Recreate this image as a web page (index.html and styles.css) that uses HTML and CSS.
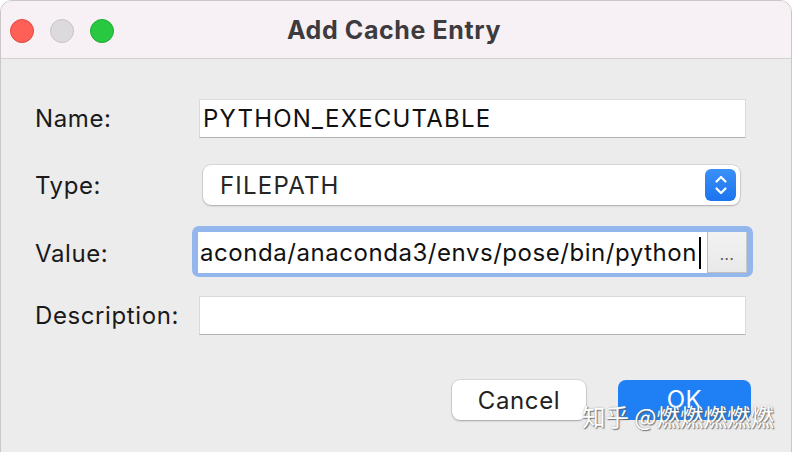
FILE: index.html
```html
<!DOCTYPE html>
<html>
<head>
<meta charset="utf-8">
<link rel="stylesheet" href="styles.css">
</head>
<body>
<div class="window">
  <div class="titlebar">
    <div class="lights">
      <span class="dot red"></span>
      <span class="dot grey"></span>
      <span class="dot green"></span>
    </div>
    <div class="title">Add Cache Entry</div>
    <div class="spacer"></div>
  </div>
  <div class="form">
    <div class="row row-name">
      <div class="label">Name:</div>
      <div class="field"><span class="caps">PYTHON_EXECUTABLE</span></div>
    </div>
    <div class="row row-type">
      <div class="label">Type:</div>
      <div class="select">
        <span class="caps">FILEPATH</span>
        <span class="stepper">
          <svg width="14" height="22" viewBox="0 0 14 22"><path d="M2.5 7.5 L7 3 L11.5 7.5 M2.5 14.5 L7 19 L11.5 14.5" fill="none" stroke="#fff" stroke-width="2.2" stroke-linecap="round" stroke-linejoin="round"/></svg>
        </span>
      </div>
    </div>
    <div class="row row-value">
      <div class="label">Value:</div>
      <div class="ring">
        <div class="vfield"><span class="vtext">aconda/anaconda3/envs/pose/bin/python</span><span class="caret"></span></div>
        <div class="browse">...</div>
      </div>
    </div>
    <div class="row row-desc">
      <div class="label">Description:</div>
      <div class="field"></div>
    </div>
  </div>
  <div class="buttons">
    <div class="btn cancel">Cancel</div>
    <div class="btn ok">OK</div>
  </div>
  <div class="watermark">知乎 @燃燃燃燃燃</div>
</div>
</body>
</html>
```
FILE: styles.css
```css
* { box-sizing: border-box; }
html, body { margin: 0; padding: 0; }
body {
  width: 794px;
  height: 452px;
  overflow: hidden;
  background: #ffffff;
  font-family: Inter, "Noto Sans", "Liberation Sans", sans-serif;
  color: #1c1c1c;
}
.window {
  position: relative;
  width: 792px;
  height: 460px;
  background: #ececec;
  border: 1px solid #c9c7c9;
  border-radius: 12px 12px 0 0;
  overflow: hidden;
}
.titlebar {
  height: 58px;
  background: #f7f0f4;
  border-bottom: 1px solid #d2d0d2;
  display: grid;
  grid-template-columns: 1fr auto 1fr;
  align-items: center;
}
.lights {
  display: flex;
  gap: 16px;
  padding-left: 9px;
  padding-top: 2px;
}
.dot {
  width: 24px;
  height: 24px;
  border-radius: 50%;
  display: block;
}
.red { background: #fe5f57; border: 1px solid #e2463f; }
.grey { background: #dcdadc; border: 1px solid #c6c4c6; }
.green { background: #28c840; border: 1px solid #1eab31; }
.title {
  font-weight: 700;
  font-size: 25px;
  letter-spacing: 0.6px;
  color: #3d3b3e;
  padding-top: 1px;
  margin-right: 4px;
}
.form {
  display: flex;
  flex-direction: column;
  padding-left: 34px;
  padding-right: 45px;
  margin-top: 40px;
}
.row {
  display: flex;
  align-items: center;
}
.row-type { margin-top: 27px; }
.row-value { margin-top: 21px; }
.row-desc { margin-top: 19px; }
.label {
  width: 164px;
  flex: none;
  font-size: 24px;
  letter-spacing: 0.6px;
  color: #1a1a1a;
}
.row-value .label { padding-top: 3px; }
.caps { letter-spacing: 1.2px; }
.field {
  flex: 1;
  height: 39px;
  background: #fff;
  border: 1px solid #dadada;
  border-bottom-color: #b3b3b3;
  display: flex;
  align-items: center;
  padding-left: 3px;
  font-size: 24px;
  color: #111;
}
.select {
  flex: 1;
  margin-left: 4px;
  margin-right: 6px;
  height: 40px;
  background: #fff;
  border-radius: 8px;
  box-shadow: 0 0 0 0.5px rgba(0,0,0,0.16), 0 1px 2px rgba(0,0,0,0.22);
  display: flex;
  align-items: center;
  justify-content: space-between;
  padding-left: 17px;
  padding-right: 4px;
  font-size: 24px;
  color: #262626;
}
.stepper {
  width: 31px;
  height: 32px;
  border-radius: 6px;
  background: linear-gradient(#3b90f8, #1c74ee);
  display: flex;
  align-items: center;
  justify-content: center;
}
.ring {
  flex: 1;
  margin-left: -7px;
  margin-right: -7px;
  height: 51px;
  background: #93b6ec;
  border-radius: 7px;
  padding: 6px 6px 4px 6px;
  display: flex;
}
.vfield {
  flex: 1;
  background: #fff;
  display: flex;
  align-items: center;
  padding-left: 2px;
  font-size: 24px;
  letter-spacing: 0.55px;
  color: #111;
  overflow: hidden;
  white-space: nowrap;
}
.caret {
  display: block;
  width: 2px;
  height: 32px;
  background: #000;
  margin-left: 2px;
}
.browse {
  width: 40px;
  background: linear-gradient(#f2f2f2, #e9e9e9);
  border-left: 1px solid #bdbdbd;
  border-right: 1px solid #c9c9c9;
  border-bottom: 1px solid #c0c0c0;
  display: flex;
  align-items: center;
  justify-content: center;
  font-size: 15px;
  color: #555;
  padding-top: 4px;
  letter-spacing: 0.5px;
}
.buttons {
  display: flex;
  justify-content: flex-end;
  gap: 32px;
  padding-right: 40px;
  margin-top: 45px;
}
.btn {
  width: 134px;
  height: 40px;
  border-radius: 8px;
  display: flex;
  align-items: center;
  justify-content: center;
  font-size: 24px;
  letter-spacing: 0.6px;
}
.cancel {
  background: #fff;
  color: #222;
  box-shadow: 0 0 0 0.5px rgba(0,0,0,0.16), 0 1px 2px rgba(0,0,0,0.25);
}
.ok {
  width: 133px;
  background: #1f80f5;
  color: #fff;
  padding-bottom: 2px;
}
.watermark {
  position: absolute;
  left: 581px;
  top: 398px;
  font-family: "Noto Sans CJK SC", sans-serif;
  font-size: 23.5px;
  color: #fff;
  text-shadow: 1px 1px 1px rgba(90,90,90,0.8), 0 0 2px rgba(120,120,120,0.6);
  white-space: nowrap;
}
```
